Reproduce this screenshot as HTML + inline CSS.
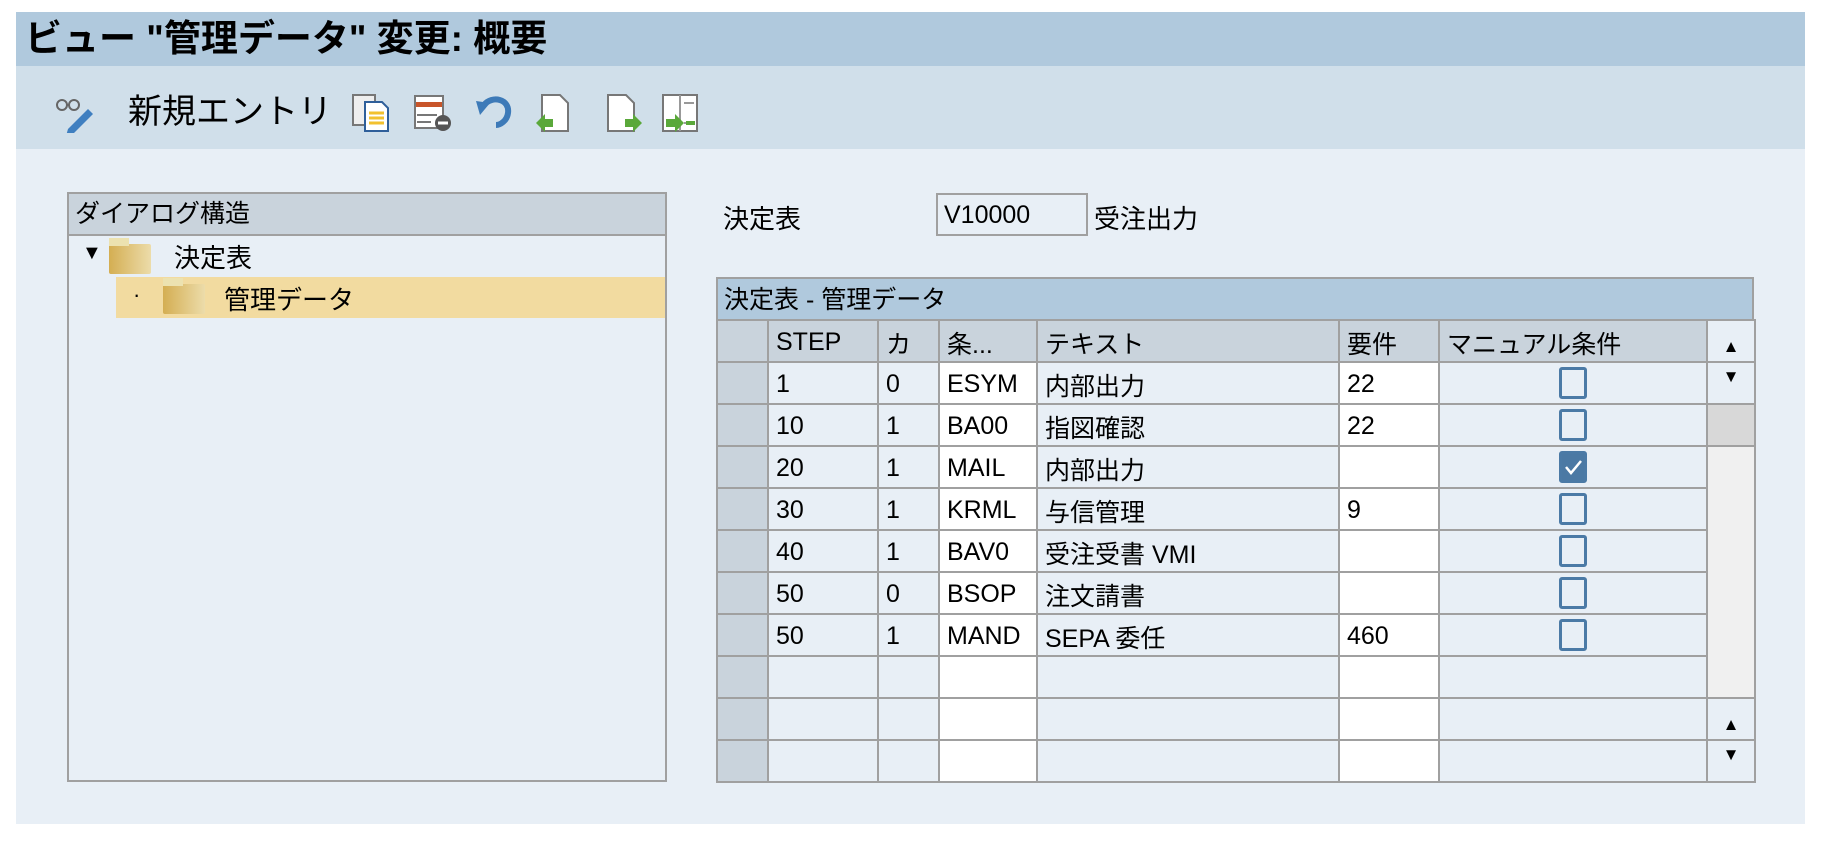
<!DOCTYPE html>
<html><head><meta charset="utf-8">
<style>
*{box-sizing:border-box;margin:0;padding:0}
body{width:1824px;height:844px;background:#fff;font-family:"Liberation Sans","Noto Sans CJK JP",sans-serif;color:#000;position:relative;overflow:hidden}
.abs{position:absolute}
#page{left:16px;top:12px;width:1789px;height:812px;background:#e8eff6}
#title{left:16px;top:12px;width:1789px;height:54px;background:#b0c9dd;font-weight:bold;font-size:37px;line-height:54px;padding-left:9px}
#tool{left:16px;top:66px;width:1789px;height:83px;background:#d0dfea}
.ico{position:absolute;top:93px;width:40px;height:40px}
#tree{left:67px;top:192px;width:600px;height:590px;border:2px solid #a0a0a0;background:#e8eff6}
#tree .hd{height:42px;background:#c9d3dc;border-bottom:2px solid #a0a0a0;font-size:25px;line-height:40px;padding-left:6px}
.folder{position:absolute;width:42px;height:30px;background:linear-gradient(90deg,#d4ae52,#ecdcaa);border-radius:2px}
.folder:before{content:"";position:absolute;left:0;top:-6px;width:20px;height:8px;background:#ece2b0}
table{border-collapse:collapse;table-layout:fixed}
td{border:2px solid #a0a0a0;height:42px;font-size:25px;padding-left:7px;padding-top:3px;background:#e8eff6;white-space:nowrap;overflow:hidden}
td.s{background:#c9d3dc}
td.w{background:#fff}
tr.h td{background:#c9d3dc}
td.sb{padding:0;text-align:center;font-size:17px;background:#e8eff6}
.cb{display:inline-block;width:28px;height:32px;border:3px solid #4b7aa6;border-radius:3px;vertical-align:middle;background:#e8eff6}
.cb.on{background:#4b79a4;position:relative}
</style></head><body>
<div id="page" class="abs"></div>
<div id="title" class="abs">ビュー "管理データ" 変更: 概要</div>
<div id="tool" class="abs"></div>
<svg class="ico" style="left:55px" viewBox="0 0 40 40"><circle cx="7" cy="12" r="5" fill="none" stroke="#666" stroke-width="2"/><circle cx="19" cy="12" r="5" fill="none" stroke="#666" stroke-width="2"/><path d="M12 12h2" stroke="#666" stroke-width="2"/><path d="M33 16l5 5-20 20-7 2 2-7z" fill="#3f7fc0"/></svg>
<div class="abs" style="left:128px;top:92px;font-size:34px;line-height:40px">新規エントリ</div>
<svg class="ico" style="left:351px" viewBox="0 0 40 40"><rect x="2" y="2" width="22" height="30" fill="#eee" stroke="#777" stroke-width="2"/><path d="M14 9h17l6 6v23H14z" fill="#fff" stroke="#2f5f9a" stroke-width="2"/><path d="M18 20h15M18 25h15M18 30h15" stroke="#f2c12e" stroke-width="3"/></svg>
<svg class="ico" style="left:413px" viewBox="0 0 40 40"><rect x="2" y="3" width="28" height="32" fill="#fff" stroke="#777" stroke-width="2"/><rect x="3" y="9" width="26" height="5" fill="#c8552a"/><path d="M4 22h20M4 29h14" stroke="#777" stroke-width="2"/><circle cx="30" cy="30" r="8" fill="#555"/><path d="M25 30h10" stroke="#fff" stroke-width="3"/></svg>
<svg class="ico" style="left:474px" viewBox="0 0 40 40"><path d="M10 12 C18 2 36 6 34 20 C33 28 26 32 22 32" fill="none" stroke="#3d7ab8" stroke-width="6"/><path d="M2 8l14 2-10 12z" fill="#3d7ab8"/></svg>
<svg class="ico" style="left:534px" viewBox="0 0 40 40"><path d="M8 2h18l8 8v28H8z" fill="#fff" stroke="#777" stroke-width="2"/><path d="M2 30l9-9v5h8v8h-8v5z" fill="#5aa83a"/></svg>
<svg class="ico" style="left:604px" viewBox="0 0 40 40"><path d="M4 2h18l8 8v28H4z" fill="#fff" stroke="#777" stroke-width="2"/><path d="M38 30l-9-9v5h-8v8h8v5z" fill="#5aa83a"/></svg>
<svg class="ico" style="left:660px" viewBox="0 0 40 40"><rect x="3" y="2" width="34" height="36" fill="#fff" stroke="#777" stroke-width="2"/><path d="M20 2v36M24 10h10M24 30h10" stroke="#999" stroke-width="2"/><path d="M24 30l-9-9v5H6v8h9v5z" fill="#5aa83a"/><path d="M26 30h9" stroke="#5aa83a" stroke-width="4"/></svg>

<div id="tree" class="abs"><div class="hd">ダイアログ構造</div></div>
<div class="abs" style="left:82px;top:242px;font-size:20px">▼</div>
<div class="folder" style="left:109px;top:244px"></div>
<div class="abs" style="left:174px;top:238px;font-size:26px">決定表</div>
<div class="abs" style="left:116px;top:277px;width:549px;height:41px;background:#f2dba0"></div>
<div class="abs" style="left:133px;top:282px;font-size:22px">·</div>
<div class="folder" style="left:163px;top:284px"></div>
<div class="abs" style="left:224px;top:280px;font-size:26px">管理データ</div>

<div class="abs" style="left:723px;top:199px;font-size:26px">決定表</div>
<div class="abs" style="left:936px;top:193px;width:152px;height:43px;border:2px solid #a0a0a0;background:#e8eff6;font-size:25px;line-height:40px;padding-left:6px">V10000</div>
<div class="abs" style="left:1094px;top:199px;font-size:26px">受注出力</div>

<div class="abs" style="left:716px;top:277px;width:1038px;height:44px;background:#b0c9dd;border:2px solid #a0a0a0;border-bottom:none;font-size:25px;line-height:42px;padding-left:6px">決定表 - 管理データ</div>
<table class="abs" style="left:716px;top:319px;width:1038px">
<colgroup><col style="width:51px"><col style="width:110px"><col style="width:61px"><col style="width:98px"><col style="width:302px"><col style="width:100px"><col style="width:268px"><col style="width:48px"></colgroup>
<tr class="h"><td class="s"></td><td>STEP</td><td>カ</td><td>条...</td><td>テキスト</td><td>要件</td><td>マニュアル条件</td><td class="sb" style="background:#e8eff6;vertical-align:bottom;padding-bottom:4px">▲</td></tr>
<tr><td class="s"></td><td>1</td><td>0</td><td class="w">ESYM</td><td>内部出力</td><td class="w">22</td><td style="text-align:center;padding:0"><span class="cb"></span></td><td class="sb" style="vertical-align:top;padding-top:4px">▼</td></tr>
<tr><td class="s"></td><td>10</td><td>1</td><td class="w">BA00</td><td>指図確認</td><td class="w">22</td><td style="text-align:center;padding:0"><span class="cb"></span></td><td class="sb" style="background:#d8d8d8"></td></tr>
<tr><td class="s"></td><td>20</td><td>1</td><td class="w">MAIL</td><td>内部出力</td><td class="w"></td><td style="text-align:center;padding:0"><span class="cb on"><svg width="22" height="26" viewBox="0 0 22 26" style="position:absolute;left:0;top:0"><path d="M4 13l5 6 10-12" fill="none" stroke="#fff" stroke-width="2.5"/></svg></span></td><td class="sb" rowspan="6" style="background:#f0f0f0"></td></tr>
<tr><td class="s"></td><td>30</td><td>1</td><td class="w">KRML</td><td>与信管理</td><td class="w">9</td><td style="text-align:center;padding:0"><span class="cb"></span></td></tr>
<tr><td class="s"></td><td>40</td><td>1</td><td class="w">BAV0</td><td>受注受書 VMI</td><td class="w"></td><td style="text-align:center;padding:0"><span class="cb"></span></td></tr>
<tr><td class="s"></td><td>50</td><td>0</td><td class="w">BSOP</td><td>注文請書</td><td class="w"></td><td style="text-align:center;padding:0"><span class="cb"></span></td></tr>
<tr><td class="s"></td><td>50</td><td>1</td><td class="w">MAND</td><td>SEPA 委任</td><td class="w">460</td><td style="text-align:center;padding:0"><span class="cb"></span></td></tr>
<tr><td class="s"></td><td></td><td></td><td class="w"></td><td></td><td class="w"></td><td></td></tr>
<tr><td class="s"></td><td></td><td></td><td class="w"></td><td></td><td class="w"></td><td></td><td class="sb" style="vertical-align:bottom;padding-bottom:4px">▲</td></tr>
<tr><td class="s"></td><td></td><td></td><td class="w"></td><td></td><td class="w"></td><td></td><td class="sb" style="vertical-align:top;padding-top:4px">▼</td></tr>
</table>
</body></html>
